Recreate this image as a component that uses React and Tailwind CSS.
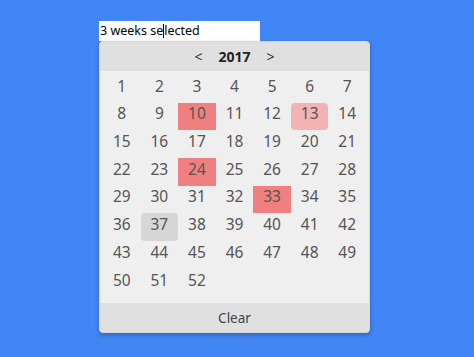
import React from "react";

const weeks = Array.from({ length: 52 }, (_, i) => i + 1);

// week -> look of its cell
const marks = {
  10: "bg-[#f08080] text-[#7a3a3a]",
  24: "bg-[#f08080] text-[#7a3a3a]",
  33: "bg-[#f08080] text-[#7a3a3a]",
  13: "bg-[#f4b3b3] text-[#6b4a4a] rounded-[4px]",
  37: "bg-[#d6d6d6] rounded-[4px]",
};

function WeekCell({ n }) {
  const extra = marks[n] || "";
  return (
    <div className={"flex items-center justify-center pb-[5px] text-[15.5px] text-[#555] " + extra}>
      {n}
    </div>
  );
}

export default function App() {
  return (
    <div
      className="w-[474px] h-[357px] bg-[#4285f4] pl-[99px] pt-[21px]"
      style={{ fontFamily: '"Noto Sans", "Open Sans", sans-serif' }}
    >
      <div className="w-[161px] h-[20px] bg-white flex items-center pl-[1px] text-[12.5px] text-black leading-none">
        <span>3 weeks se</span>
        <span className="inline-block w-px h-[14px] bg-black"></span>
        <span>lected</span>
      </div>

      <div className="w-[271px] bg-[#efefef] rounded-[4px] border border-[#d8d8d8] shadow-[0_2px_4px_rgba(0,0,0,0.25)] overflow-hidden">
        <div className="h-[29px] bg-[#e0e0e0] flex items-center justify-center text-[14px] text-[#333]">
          <span className="w-[20px] text-center">&lt;</span>
          <span className="font-bold mx-[10px] text-[#222]">2017</span>
          <span className="w-[20px] text-center">&gt;</span>
        </div>

        <div className="grid grid-cols-7 auto-rows-[27.7px] px-[3px] pt-[4px] pb-[6px]">
          {weeks.map((n) => (
            <WeekCell key={n} n={n} />
          ))}
        </div>

        <div className="h-[29px] bg-[#e0e0e0] flex items-center justify-center pt-[2px] text-[13.5px] text-[#444]">
          Clear
        </div>
      </div>
    </div>
  );
}
